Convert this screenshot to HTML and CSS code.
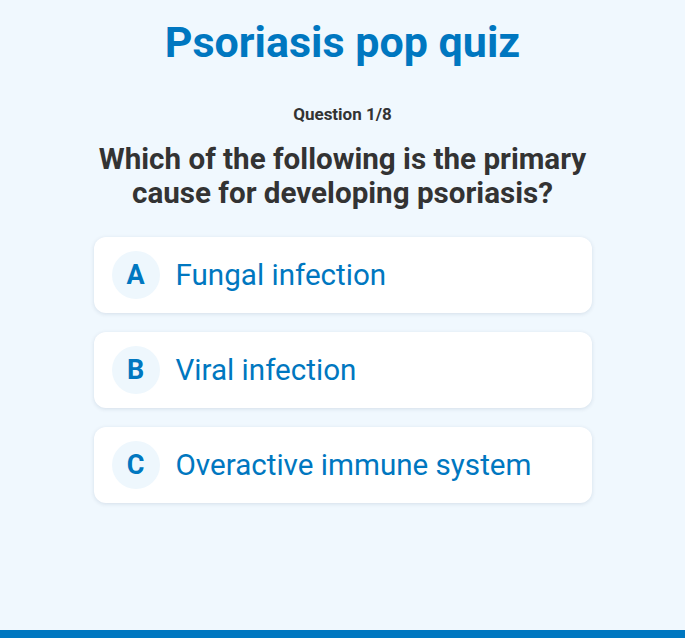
FILE: index.html
```html
<!DOCTYPE html>
<html lang="en">
<head>
<meta charset="UTF-8">
<title>Psoriasis pop quiz</title>
<link rel="stylesheet" href="styles.css">
</head>
<body>

<!-- QUIZ CARD -->
<main class="quiz">
  <h1 class="quiz-title">Psoriasis pop quiz</h1>
  <div class="quiz-count">Question 1/8</div>
  <h2 class="quiz-question">Which of the following is the primary cause for developing psoriasis?</h2>

  <div class="options">
    <button class="option"><span class="option-key">A</span><span class="option-text">Fungal infection</span></button>
    <button class="option"><span class="option-key">B</span><span class="option-text">Viral infection</span></button>
    <button class="option"><span class="option-key">C</span><span class="option-text">Overactive immune system</span></button>
  </div>
</main>

<div class="bottom-bar"></div>

</body>
</html>
```
FILE: styles.css
```css
/* -------- RESET -------- */
*{margin:0;padding:0;box-sizing:border-box}

:root{
  --bg:#f0f8fe;
  --blue:#0077c0;
  --text:#333;
  --chip:#eef7fd;
}

body{
  font-family:Roboto,'Liberation Sans',Arial,sans-serif;
  background:var(--bg);
  color:var(--text);
  height:100vh;
  overflow:hidden;
  display:flex;
  flex-direction:column;
}

/* -------- QUIZ -------- */
.quiz{
  flex:1;
  width:498px;
  margin:0 auto;
  padding-top:17px;
  text-align:center;
}
.quiz-title{
  font-size:43px;font-weight:700;color:var(--blue);
  line-height:50px;
}
.quiz-count{
  font-size:17px;font-weight:700;
  margin-top:37px;line-height:20px;
}
.quiz-question{
  font-size:29.6px;font-weight:700;
  line-height:34px;
  margin-top:18px;
}

/* -------- OPTIONS -------- */
.options{
  display:flex;flex-direction:column;gap:19px;
  margin-top:27px;
}
.option{
  display:flex;align-items:center;gap:16px;
  height:76px;
  padding:0 18px;
  background:#fff;border:0;border-radius:12px;
  box-shadow:0 1px 4px rgba(0,40,80,.12);
  font-family:inherit;text-align:left;cursor:pointer;
}
.option-key{
  width:48px;height:48px;border-radius:50%;flex:none;
  background:var(--chip);color:var(--blue);
  display:flex;align-items:center;justify-content:center;
  font-size:27px;font-weight:700;
}
.option-text{font-size:29.6px;color:var(--blue);font-weight:400}

/* -------- FOOTER BAR -------- */
.bottom-bar{height:8px;background:var(--blue)}
```
